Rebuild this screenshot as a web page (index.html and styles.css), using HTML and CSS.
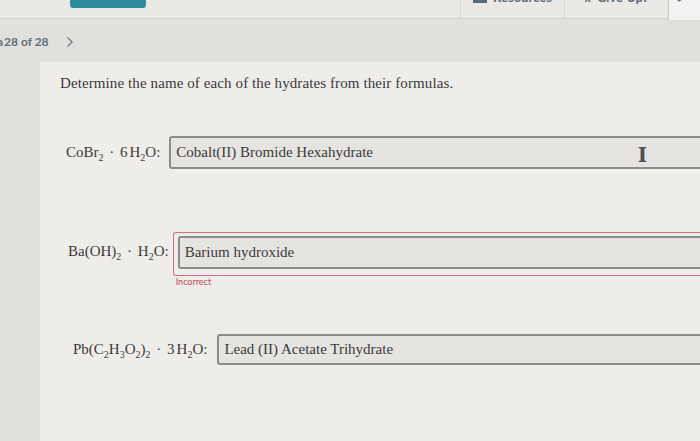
FILE: index.html
```html
<!DOCTYPE html>
<html>
<head>
<meta charset="utf-8">
<link rel="stylesheet" href="styles.css">
</head>
<body>
<div class="topbar">
  <div class="teal-btn"></div>
  <div class="tabs">
    <div class="tab t-res"><span class="tab-in"><svg class="ico" width="14" height="12" viewBox="0 0 14 12"><rect x="0" y="0" width="14" height="12" fill="#5b6b7a"/></svg>Resources</span></div>
    <div class="tab t-give"><span class="tab-in"><span class="x">x</span>Give Up?</span></div>
    <div class="tab t-act"><span class="tab-in"><svg width="10" height="12" viewBox="0 0 10 12"><path d="M1 2 L8 6 L1 10" fill="none" stroke="#5b6b7a" stroke-width="2"/></svg></span></div>
  </div>
</div>
<div class="nav">
  <span class="count"><span class="lead">a</span>28 of 28</span>
  <svg class="chev" width="8" height="12" viewBox="0 0 8 12"><path d="M1.5 1.5 L6 6 L1.5 10.5" fill="none" stroke="#6f7f8c" stroke-width="1.4"/></svg>
</div>
<div class="content">
  <div class="card">
    <p class="prompt">Determine the name of each of the hydrates from their formulas.</p>
    <div class="row r1">
      <span class="label">CoBr<sub>2</sub> <span class="dot">·</span> 6<span class="thin"></span>H<sub>2</sub>O:</span>
      <div class="field"><span class="val">Cobalt(II) Bromide Hexahydrate</span><span class="ibeam">I</span></div>
    </div>
    <div class="row r2">
      <span class="label">Ba(OH)<sub>2</sub> <span class="dot">·</span> H<sub>2</sub>O:</span>
      <div class="wrong-wrap">
        <div class="wrong"><div class="field"><span class="val">Barium hydroxide</span></div></div>
        <div class="msg">Incorrect</div>
      </div>
    </div>
    <div class="row r3">
      <span class="label">Pb(C<sub>2</sub>H<sub>3</sub>O<sub>2</sub>)<sub>2</sub> <span class="dot">·</span> 3<span class="thin"></span>H<sub>2</sub>O:</span>
      <div class="field"><span class="val">Lead (II) Acetate Trihydrate</span></div>
    </div>
  </div>
</div>
</body>
</html>
```
FILE: styles.css
```css
html, body {
  margin: 0;
  padding: 0;
}
body {
  width: 700px;
  height: 441px;
  overflow: hidden;
  background: #e2e0dd;
  font-family: "Liberation Serif", "Times New Roman", serif;
}
.topbar {
  height: 18px;
  background: #ebe9e6;
  border-bottom: 1px solid #d6d4d1;
  display: flex;
  position: relative;
}
.teal-btn {
  margin-left: 70px;
  width: 76px;
  height: 8px;
  background: #2f8a9b;
  border-radius: 0 0 3px 3px;
}
.tabs {
  margin-left: auto;
  display: flex;
  height: 18px;
}
.tab {
  overflow: hidden;
  height: 18px;
  border-left: 1px solid #d9d7d4;
  font-family: "Lato", "Liberation Sans", sans-serif;
  font-weight: bold;
  font-size: 13px;
  color: #5b6b7a;
  display: flex;
  justify-content: center;
}
.tab-in {
  display: flex;
  align-items: center;
  gap: 6px;
  margin-top: -12px;
  height: 18px;
}
.t-res { width: 103px; }
.t-give { width: 103px; }
.t-act {
  width: 32px;
  background: #f3f2f0;
  border-left: 1px solid #c9c7c4;
  height: 20px;
  margin-bottom: -2px;
  justify-content: flex-start;
  padding-left: 8px;
  box-sizing: border-box;
}
.x { font-size: 12px; }
.nav {
  height: 43px;
  display: flex;
  align-items: center;
  font-family: "Lato", "Liberation Sans", sans-serif;
  font-size: 12px;
  font-weight: bold;
  color: #5e6e7c;
}
.count {
  margin-left: -3px;
  position: relative;
  top: 1px;
}
.lead { color: #5e6e7c; margin-right: 1px; }
.chev {
  margin-left: 17px;
  position: relative;
  top: 1px;
}
.content {
  padding-left: 40px;
}
.card {
  background: #efedea;
  height: 380px;
  padding: 12px 0 0 20px;
  box-sizing: border-box;
  color: #3a3a3a;
}
.prompt {
  margin: 0;
  font-size: 15px;
  line-height: 18px;
  letter-spacing: 0.1px;
}
.row {
  display: flex;
  align-items: center;
  font-size: 15px;
}
.label {
  white-space: nowrap;
  margin-right: 9px;
}
sub {
  font-size: 10px;
  vertical-align: -4px;
  line-height: 0;
}
.dot { margin: 0 2px; }
.thin { display: inline-block; width: 2px; }
.r1 {
  margin-top: 44px;
  margin-left: 6px;
}
.field {
  flex: 1;
  height: 33px;
  border: 2px solid #8b8b8c;
  border-right: none;
  border-radius: 3px 0 0 3px;
  background: #e6e4e1;
  box-sizing: border-box;
  display: flex;
  align-items: center;
  padding-left: 5px;
  font-size: 15px;
  color: #3a3a3a;
}
.ibeam {
  margin-left: auto;
  margin-right: 53px;
  font-family: "DejaVu Serif", serif;
  font-weight: bold;
  font-size: 20px;
  color: #4c4f58;
  position: relative;
  top: 2px;
}
.r2 {
  margin-top: 63px;
  margin-left: 8px;
  align-items: flex-start;
}
.r2 .label { margin-top: 11px; margin-right: 4px; }
.wrong-wrap {
  flex: 1;
  display: flex;
  flex-direction: column;
}
.wrong {
  border: 1px solid #d2707a;
  border-right: none;
  border-radius: 3px 0 0 3px;
  padding: 3px 0 6px 4px;
  display: flex;
}
.msg {
  font-family: "Lato", "Liberation Sans", sans-serif;
  font-size: 9px;
  color: #c4485a;
  margin-top: 0;
  margin-left: 3px;
}
.r3 {
  margin-top: 47px;
  margin-left: 13px;
}
.r3 .label { margin-right: 10px; }
.r3 .field { height: 31px; }
```
